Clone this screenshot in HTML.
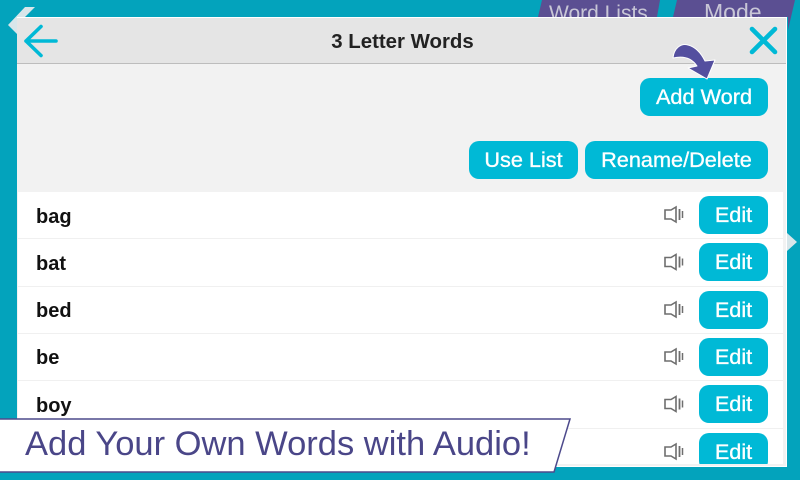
<!DOCTYPE html>
<html>
<head>
<meta charset="utf-8">
<style>
html,body{margin:0;padding:0;width:800px;height:480px;overflow:hidden;background:#03a3bc;font-family:"Liberation Sans",sans-serif}
.abs,.btn,.word,.sep,.spk{position:absolute}
.soft{filter:blur(.35px)}
.btn{background:#00b9d6;color:#fff;border-radius:10px;font-size:21.7px;text-align:center;line-height:37.500px;height:38px;-webkit-text-stroke:.35px #fff;white-space:nowrap}
.word{left:36px;font-size:20px;font-weight:bold;color:#111;line-height:24px}
.sep{left:18px;width:765px;height:1px;background:#f0f0f0}
</style>
</head>
<body>
<div class="abs" style="left:0;top:0;width:800px;height:480px;background:#03a3bc"></div>
<svg class="abs soft" style="left:0;top:0" width="800" height="480">
<path d="M538 17L542 0H660L657 17Z" fill="#5b4f92"/>
<path d="M673 17L677 0H795L788 30V17Z" fill="#5b4f92"/>
<text x="549" y="20" font-family="Liberation Sans" font-size="21" fill="#c8c6d6">Word Lists</text>
<text x="704" y="20" font-family="Liberation Sans" font-size="23" fill="#c8c6d6">Mode</text>
<path d="M25 7H35L17 25V34L8 25Z" fill="#d8e6ea"/>
<path d="M787 233L797 242L787 251Z" fill="#d8e6ea"/>
</svg>
<div class="abs" style="left:17px;top:17px;width:770px;height:450px;background:#f2f2f2;box-shadow:inset 0 1px 0 #fff,inset -1px 0 0 #fff,inset 0 -1px 0 #fff"></div>
<div class="abs" style="left:17px;top:18px;width:769px;height:45px;background:#e5e5e5;border-bottom:1px solid #bdbdbd"></div>
<div class="abs soft" style="left:18px;top:29px;width:769px;text-align:center;font-size:20.400px;font-weight:bold;color:#222;line-height:26px">3 Letter Words</div>
<svg class="abs soft" style="left:17px;top:18px" width="770" height="50" fill="none" stroke="#00b9d6" stroke-width="3.600">
<path d="M9 23H39M24 8.500L9 23L24 37.500" stroke-linecap="round" stroke-linejoin="round"/>
<path d="M735 11L758 34M758 11L735 34" stroke-width="4.600" stroke-linecap="round"/>
</svg>
<div class="abs" style="left:18px;top:192px;width:765px;height:272px;background:#fff"></div>
<div class="sep" style="top:238px"></div>
<div class="sep" style="top:286px"></div>
<div class="sep" style="top:333px"></div>
<div class="sep" style="top:380px"></div>
<div class="sep" style="top:428px"></div>
<div class="btn soft" style="left:640px;top:78px;width:128px">Add Word</div>
<div class="btn soft" style="left:469px;top:141px;width:109px">Use List</div>
<div class="btn soft" style="left:585px;top:141px;width:183px">Rename/Delete</div>
<div class="word soft" style="top:205px">bag</div>
<div class="word soft" style="top:252px">bat</div>
<div class="word soft" style="top:299px">bed</div>
<div class="word soft" style="top:346px">be</div>
<div class="word soft" style="top:394px">boy</div>
<div class="btn soft" style="left:699px;top:196px;width:69px">Edit</div>
<div class="btn soft" style="left:699px;top:243px;width:69px">Edit</div>
<div class="btn soft" style="left:699px;top:291px;width:69px">Edit</div>
<div class="btn soft" style="left:699px;top:338px;width:69px">Edit</div>
<div class="btn soft" style="left:699px;top:385px;width:69px">Edit</div>
<div class="abs" style="left:699px;top:433px;width:69px;height:31px;overflow:hidden"><div class="btn soft" style="left:0;top:0;width:69px">Edit</div></div>
<svg class="abs soft" style="left:0;top:0" width="800" height="480" fill="none" stroke="#6e6e6e" stroke-width="1.600">
<defs><g id="s"><path d="M665 210H671L676 207V222L671 219H665Z"/><path d="M679.500 209V220" stroke-width="1.800"/><path d="M682.500 211V218" stroke-width="1.500"/></g></defs>
<use href="#s"/>
<use href="#s" y="47.500"/>
<use href="#s" y="95"/>
<use href="#s" y="142"/>
<use href="#s" y="189.500"/>
<use href="#s" y="237"/>
</svg>
<svg class="abs" style="left:0;top:0" width="800" height="480">
<path d="M673 58C674 48 681 43 688 45C696 47 701 53 705 61L715 60L707 79L688 68L697 66C693 60 686 55 673 58Z" fill="#544f9f" stroke="#fff" stroke-width="1" stroke-linejoin="round"/>
<path d="M-2 419H570L554 472H-2Z" fill="#fff" stroke="#4d4a8c" stroke-width="1.500"/>
</svg>
<div class="abs soft" style="left:25px;top:424px;font-size:34.500px;line-height:40px;color:#4a4688;white-space:nowrap">Add Your Own Words with Audio!</div>
</body>
</html>
